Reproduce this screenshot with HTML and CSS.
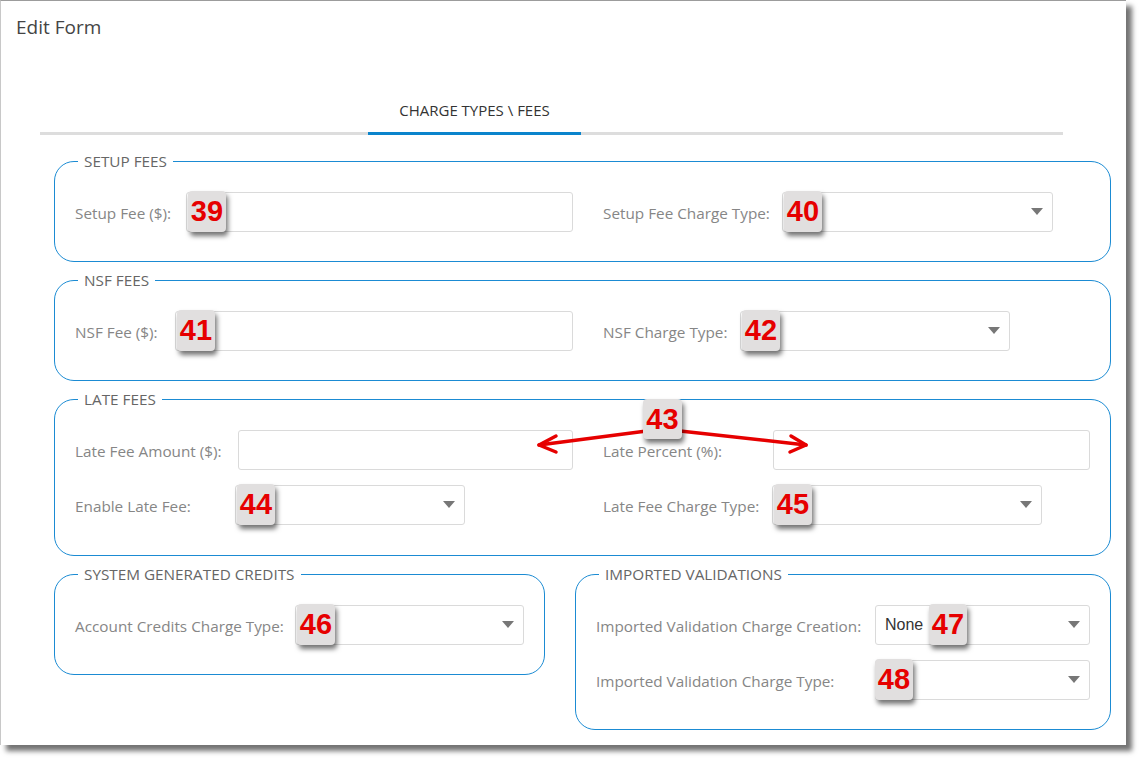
FILE: index.html
```html
<!DOCTYPE html>
<html lang="en">
<head>
<meta charset="utf-8">
<title>Edit Form</title>
<link rel="stylesheet" href="styles.css">
</head>
<body>
<div class="window">
  <h1 class="title">Edit Form</h1>
  <div class="tabs">
    <div class="tab active">CHARGE TYPES \ FEES</div>
  </div>
  <div class="content">
    <fieldset class="group">
      <legend>SETUP FEES</legend>
      <div class="cols">
        <div class="field">
          <label class="lbl lbl-setup">Setup Fee ($):</label>
          <div class="ctrl grow"><span class="badge">39</span></div>
        </div>
        <div class="field">
          <label class="lbl lbl-setup-type">Setup Fee Charge Type:</label>
          <div class="ctrl select w-271"><span class="caret"></span><span class="badge">40</span></div>
        </div>
      </div>
    </fieldset>

    <fieldset class="group">
      <legend>NSF FEES</legend>
      <div class="cols">
        <div class="field">
          <label class="lbl lbl-nsf">NSF Fee ($):</label>
          <div class="ctrl grow"><span class="badge">41</span></div>
        </div>
        <div class="field">
          <label class="lbl lbl-nsf-type">NSF Charge Type:</label>
          <div class="ctrl select w-270"><span class="caret"></span><span class="badge">42</span></div>
        </div>
      </div>
    </fieldset>

    <fieldset class="group group-late">
      <legend>LATE FEES</legend>
      <div class="cols">
        <div class="field">
          <label class="lbl lbl-late-amt">Late Fee Amount ($):</label>
          <div class="ctrl grow"></div>
        </div>
        <div class="field">
          <label class="lbl lbl-late-pct">Late Percent (%):</label>
          <div class="ctrl grow"></div>
        </div>
        <div class="field">
          <label class="lbl lbl-enable">Enable Late Fee:</label>
          <div class="ctrl select w-230"><span class="caret"></span><span class="badge">44</span></div>
        </div>
        <div class="field">
          <label class="lbl lbl-late-type">Late Fee Charge Type:</label>
          <div class="ctrl select w-270"><span class="caret"></span><span class="badge">45</span></div>
        </div>
      </div>
    </fieldset>

    <div class="bottom-row">
      <fieldset class="group group-credits">
        <legend>SYSTEM GENERATED CREDITS</legend>
        <div class="stack">
          <div class="field">
            <label class="lbl lbl-credits">Account Credits Charge Type:</label>
            <div class="ctrl select grow"><span class="caret"></span><span class="badge">46</span></div>
          </div>
        </div>
      </fieldset>
      <fieldset class="group group-imported">
        <legend>IMPORTED VALIDATIONS</legend>
        <div class="stack">
          <div class="field">
            <label class="lbl lbl-imp">Imported Validation Charge Creation:</label>
            <div class="ctrl select grow"><span class="value">None</span><span class="caret"></span><span class="badge badge-47">47</span></div>
          </div>
          <div class="field">
            <label class="lbl lbl-imp">Imported Validation Charge Type:</label>
            <div class="ctrl select grow"><span class="caret"></span><span class="badge badge-48">48</span></div>
          </div>
        </div>
      </fieldset>
    </div>
  </div>
</div>

<svg class="arrows" width="1141" height="761" viewBox="0 0 1141 761" aria-hidden="true">
  <g fill="none" stroke="#e60000" stroke-width="3.5" stroke-linecap="round" stroke-linejoin="round">
    <path d="M662 429 L539 445"/>
    <path d="M556 436 L539 445 L556 452"/>
    <path d="M662 429 L806 445"/>
    <path d="M791 436 L806 445 L790 452"/>
  </g>
</svg>
<span class="badge badge-43">43</span>
</body>
</html>
```

FILE: styles.css
```css
* { box-sizing: border-box; }

html, body {
  margin: 0;
  background: #fff;
}

body {
  position: relative;
  width: 1141px;
  height: 761px;
  overflow: hidden;
  font-family: "Open Sans", "Noto Sans", sans-serif;
}

.window {
  position: relative;
  width: 1126px;
  background: #fff;
  border-top: 1px solid #9c9c9c;
  border-left: 1px solid #c8c8c8;
  box-shadow: 6px 6px 5px rgba(0, 0, 0, 0.55);
  padding-bottom: 15px;
}

/* uneven darker patches of the bottom drop shadow */
.window::after {
  content: "";
  position: absolute;
  left: 10px;
  right: -9px;
  bottom: -9px;
  height: 8px;
  z-index: -1;
  filter: blur(1.5px);
  background: linear-gradient(to right,
    transparent 0 360px,
    rgba(0, 0, 0, 0.35) 366px 722px,
    transparent 728px 975px,
    rgba(0, 0, 0, 0.3) 980px 1060px,
    rgba(0, 0, 0, 0.7) 1070px);
}

.title {
  margin: 0;
  padding: 14px 0 0 15px;
  font-size: 19px;
  line-height: 24px;
  font-weight: 400;
  color: #444;
}

.tabs {
  display: flex;
  margin: 61px 63px 0 39px;
  border-bottom: 3px solid #ddd;
}

.tab {
  margin-left: 328px;
  margin-bottom: -3px;
  width: 213px;
  padding: 0 0 12px;
  text-align: center;
  font-size: 15px;
  line-height: 20px;
  color: #333;
  border-bottom: 3px solid #0a84cc;
}

.content {
  padding: 16px 15px 0 53px;
}

.group {
  margin: 0 0 8px;
  min-width: 0;
  border: 1px solid #1b8bd3;
  border-radius: 20px;
  padding: 21px 20px 29px;
}

.group legend {
  margin-left: 3px;
  padding: 0 6px;
  font-size: 15.3px;
  line-height: 20px;
  color: #666;
}

.group-late { padding-bottom: 30px; }

.cols {
  display: grid;
  grid-template-columns: 498px 487px;
  column-gap: 30px;
  row-gap: 15px;
}

.stack {
  display: flex;
  flex-direction: column;
  gap: 15px;
}

.bottom-row {
  display: flex;
  align-items: flex-start;
  gap: 30px;
}

.bottom-row .group { margin: 0; }
.group-credits { width: 491px; }
.group-imported { width: 536px; }

.field {
  display: flex;
  align-items: center;
}

.lbl {
  flex: none;
  padding-top: 1px;
  font-size: 15.3px;
  line-height: 20px;
  color: #868686;
  white-space: nowrap;
}

.lbl-setup { width: 111px; }
.lbl-setup-type { width: 179px; }
.lbl-nsf { width: 100px; }
.lbl-nsf-type { width: 137px; }
.lbl-late-amt { width: 163px; }
.lbl-late-pct { width: 170px; }
.lbl-enable { width: 160px; }
.lbl-late-type { width: 169px; }
.lbl-credits { width: 220px; }
.lbl-imp { width: 279px; }

.ctrl {
  position: relative;
  height: 40px;
  background: #fff;
  border: 1px solid #dadada;
  border-radius: 3px;
  display: flex;
  align-items: center;
}

.grow { flex: 1; min-width: 0; }
.w-230 { width: 230px; flex: none; }
.w-270 { width: 270px; flex: none; }
.w-271 { width: 271px; flex: none; }

.value {
  padding-left: 9px;
  font-family: "Liberation Sans", Arial, sans-serif;
  font-size: 16px;
  color: #333;
}

.caret {
  position: absolute;
  right: 9px;
  top: 15px;
  width: 0;
  height: 0;
  border-left: 6px solid transparent;
  border-right: 6px solid transparent;
  border-top: 7px solid #777;
}

.badge {
  position: absolute;
  left: 1px;
  top: -2px;
  width: 38px;
  height: 41px;
  background: #e1dfdf;
  border-radius: 4px;
  box-shadow: 2px 4px 5px rgba(0, 0, 0, 0.55);
  color: #e60000;
  font-family: "Liberation Sans", Arial, sans-serif;
  font-weight: 700;
  font-size: 29px;
  line-height: 41px;
  text-align: center;
}

.badge-47 { left: 53px; }
.badge-48 { left: -1px; }

.badge-43 {
  left: 643px;
  top: 399px;
  width: 39px;
  height: 40px;
  line-height: 40px;
}

.arrows {
  position: absolute;
  left: 0;
  top: 0;
  pointer-events: none;
}
```
